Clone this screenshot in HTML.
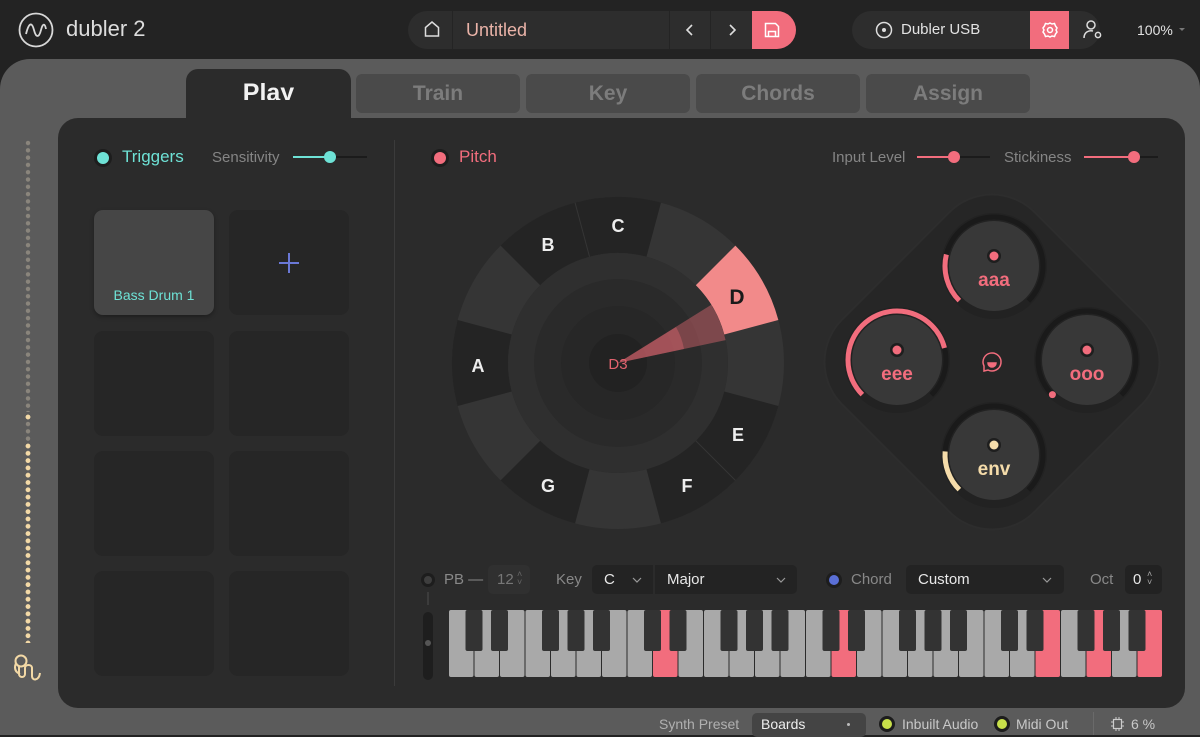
<!DOCTYPE html>
<html><head><meta charset="utf-8">
<style>
*{margin:0;padding:0;box-sizing:border-box}
body{width:1200px;height:735px;overflow:hidden;background:#222;font-family:"Liberation Sans",sans-serif;position:relative}
.a{position:absolute}
.t{position:absolute;white-space:nowrap}
.tab{position:absolute;top:74px;height:39px;width:164px;background:#4a4a4a;border-radius:6px;color:#7c7c7c;font-weight:bold;font-size:21px;text-align:center;line-height:40px}
.pad{position:absolute;width:120px;height:105px;background:#262626;border-radius:9px}
.dd{position:absolute;background:#232323;border-radius:5px;height:29px;top:565px;color:#e8e8e8;font-size:15px;line-height:29px;padding-left:12px}
.lbl{position:absolute;color:#888;font-size:15px;top:571px}
</style></head><body>
<div class="a" style="left:0;top:0;width:1200px;height:60px;background:#232323"></div>
<svg class="a" style="left:17px;top:11px" width="38" height="38" viewBox="0 0 38 38"><circle cx="19" cy="19" r="16.5" fill="none" stroke="#d8d8d8" stroke-width="1.8"/><path d="M9 23 C12 11,15 11,17 19 C19 27,22 27,24 19 C26 11,28 13,29 18" fill="none" stroke="#d8d8d8" stroke-width="1.8"/></svg>
<div class="t" style="left:66px;top:16px;color:#ddd;font-size:22px">dubler 2</div>

<div class="a" style="left:408px;top:11px;width:388px;height:38px;background:#2d2d2d;border-radius:19px;overflow:hidden">
  <div class="a" style="left:44px;top:0;width:1px;height:38px;background:#242424"></div>
  <div class="a" style="left:261px;top:0;width:1px;height:38px;background:#242424"></div>
  <div class="a" style="left:302px;top:0;width:1px;height:38px;background:#242424"></div>
  <div class="a" style="left:344px;top:0;width:44px;height:38px;background:#f26d7d"></div>
</div>
<svg class="a" style="left:423px;top:20px" width="18" height="18" viewBox="0 0 18 18"><path d="M2.5 16 V7.5 L9 2 L15.5 7.5 V16 Z" fill="none" stroke="#ddd" stroke-width="1.5"/></svg>
<div class="t" style="left:466px;top:20px;color:#eab3a8;font-size:18px">Untitled</div>
<svg class="a" style="left:684px;top:23px" width="12" height="14"><path d="M8 2 L3 7 L8 12" fill="none" stroke="#ddd" stroke-width="1.6"/></svg>
<svg class="a" style="left:726px;top:23px" width="12" height="14"><path d="M4 2 L9 7 L4 12" fill="none" stroke="#ddd" stroke-width="1.6"/></svg>
<svg class="a" style="left:763px;top:21px" width="18" height="18" viewBox="0 0 18 18"><path d="M2.5 2.5 H12.5 L15.5 5.5 V15.5 H2.5 Z M5.5 15.5 V10.5 H12.5 V15.5" fill="none" stroke="#fff" stroke-width="1.5"/></svg>

<div class="a" style="left:852px;top:11px;width:248px;height:38px;background:#2d2d2d;border-radius:19px;overflow:hidden">
  <div class="a" style="left:178px;top:0;width:39px;height:38px;background:#f26d7d"></div>
</div>
<svg class="a" style="left:874px;top:20px" width="20" height="20"><circle cx="10" cy="10" r="7.5" fill="none" stroke="#ddd" stroke-width="1.5"/><circle cx="10" cy="10" r="2" fill="#ddd"/></svg>
<div class="t" style="left:901px;top:21px;color:#e2e2e2;font-size:15px">Dubler USB</div>
<svg class="a" style="left:1040px;top:20px" width="20" height="20" viewBox="0 0 20 20"><path d="M10 3 L12 4 L14.5 3.5 L15.5 6 L17 8 L16 10 L17 12 L15.5 14 L14.5 16.5 L12 16 L10 17 L8 16 L5.5 16.5 L4.5 14 L3 12 L4 10 L3 8 L4.5 6 L5.5 3.5 L8 4 Z" fill="none" stroke="#fff" stroke-width="1.5"/><circle cx="10" cy="10" r="2.5" fill="none" stroke="#fff" stroke-width="1.5"/></svg>
<svg class="a" style="left:1082px;top:19px" width="22" height="22" viewBox="0 0 22 22"><circle cx="9" cy="6" r="4" fill="none" stroke="#ddd" stroke-width="1.5"/><path d="M2 19 C2 13,7 11,11 12" fill="none" stroke="#ddd" stroke-width="1.5"/><circle cx="16" cy="16" r="2.6" fill="none" stroke="#ddd" stroke-width="1.5"/></svg>
<div class="t" style="left:1137px;top:22px;color:#e2e2e2;font-size:14px">100%</div>
<div class="t" style="left:1179px;top:28px;width:0;height:0;border-left:3px solid transparent;border-right:3px solid transparent;border-top:3px solid #777"></div>

<div class="a" style="left:0;top:59px;width:1200px;height:676px;background:#5b5b5b;border-radius:30px 30px 0 0"></div>
<div class="a" style="left:186px;top:69px;width:165px;height:60px;background:#2b2b2b;border-radius:12px 12px 0 0"></div>
<div class="t" style="left:186px;top:79px;width:165px;text-align:center;color:#f2f2f2;font-weight:bold;font-size:25px">Play</div>
<div class="tab" style="left:356px">Train</div>
<div class="tab" style="left:526px">Key</div>
<div class="tab" style="left:696px">Chords</div>
<div class="tab" style="left:866px">Assign</div>
<div class="a" style="left:58px;top:118px;width:1127px;height:590px;background:#2b2b2b;border-radius:20px"></div>
<div class="a" style="left:186px;top:100px;width:165px;height:30px;background:#2b2b2b"></div>

<div class="a" style="left:25px;top:140px;width:6px;height:272px;background:radial-gradient(circle at 3px 3px,#8a857c 2px,transparent 2.4px) 0 0/6px 7.3px repeat-y"></div>
<div class="a" style="left:25px;top:414px;width:6px;height:7px;background:radial-gradient(circle at 3px 3px,#f3d9a6 2.2px,transparent 2.6px)"></div>
<div class="a" style="left:25px;top:421px;width:6px;height:20px;background:radial-gradient(circle at 3px 3px,#8a857c 2px,transparent 2.4px) 0 0/6px 7.3px repeat-y"></div>
<div class="a" style="left:25px;top:443px;width:6px;height:200px;background:radial-gradient(circle at 3px 3px,#f3d9a6 2.2px,transparent 2.6px) 0 0/6px 7.3px repeat-y"></div>
<svg class="a" style="left:12px;top:654px" width="32" height="30" viewBox="0 0 32 30"><circle cx="9" cy="7" r="5.5" fill="none" stroke="#f3d9a6" stroke-width="2"/><path d="M7 12 V20 C7 24,13 24,13 20 V14 C13 10,20 10,20 14 V22 C20 27,27 27,28 19" fill="none" stroke="#f3d9a6" stroke-width="2"/><path d="M4 9 C2 14,3 18,8 20" fill="none" stroke="#f3d9a6" stroke-width="2"/></svg>

<div class="a" style="left:394px;top:140px;width:1px;height:546px;background:#3b3b3b"></div>

<div class="a" style="left:94px;top:149px;width:18px;height:18px;border-radius:50%;background:#1d1d1d"></div>
<div class="a" style="left:97px;top:152px;width:12px;height:12px;border-radius:50%;background:#6ee2d6"></div>
<div class="t" style="left:122px;top:147px;color:#6ee2d6;font-size:17px">Triggers</div>
<div class="t" style="left:212px;top:149px;color:#858585;font-size:15px">Sensitivity</div>
<div class="a" style="left:293px;top:156px;width:37px;height:2px;background:#6ee2d6"></div>
<div class="a" style="left:330px;top:156px;width:37px;height:2px;background:#1b1b1b"></div>
<div class="a" style="left:324px;top:151px;width:12px;height:12px;border-radius:50%;background:#6ee2d6"></div>

<div class="pad" style="left:94px;top:210px;background:#464646;box-shadow:0 2px 4px rgba(0,0,0,.3)"></div>
<div class="t" style="left:94px;top:287px;width:120px;text-align:center;color:#6ee2d6;font-size:14px">Bass Drum 1</div>
<div class="pad" style="left:229px;top:210px"></div>
<div class="a" style="left:279px;top:262px;width:20px;height:2px;background:#6a78d6"></div>
<div class="a" style="left:288px;top:253px;width:2px;height:20px;background:#6a78d6"></div>
<div class="pad" style="left:94px;top:331px"></div><div class="pad" style="left:229px;top:331px"></div>
<div class="pad" style="left:94px;top:451px"></div><div class="pad" style="left:229px;top:451px"></div>
<div class="pad" style="left:94px;top:571px"></div><div class="pad" style="left:229px;top:571px"></div>

<div class="a" style="left:431px;top:149px;width:18px;height:18px;border-radius:50%;background:#1d1d1d"></div>
<div class="a" style="left:434px;top:152px;width:12px;height:12px;border-radius:50%;background:#f26d7d"></div>
<div class="t" style="left:459px;top:147px;color:#f26d7d;font-size:17px">Pitch</div>
<div class="t" style="left:832px;top:149px;color:#858585;font-size:15px">Input Level</div>
<div class="a" style="left:917px;top:156px;width:37px;height:2px;background:#f26d7d"></div>
<div class="a" style="left:954px;top:156px;width:36px;height:2px;background:#1b1b1b"></div>
<div class="a" style="left:948px;top:151px;width:12px;height:12px;border-radius:50%;background:#f26d7d"></div>
<div class="t" style="left:1004px;top:149px;color:#858585;font-size:15px">Stickiness</div>
<div class="a" style="left:1084px;top:156px;width:50px;height:2px;background:#f26d7d"></div>
<div class="a" style="left:1134px;top:156px;width:24px;height:2px;background:#1b1b1b"></div>
<div class="a" style="left:1128px;top:151px;width:12px;height:12px;border-radius:50%;background:#f26d7d"></div>

<svg class="a" style="left:0;top:0" width="1200" height="735">
 <g transform="translate(618,363)">
  <circle r="138" fill="none" stroke="#353535" stroke-width="56"/>
  <g fill="none" stroke="#242424" stroke-width="56" stroke-dasharray="72.26 794.82">
   <circle r="138" transform="rotate(-105)"/>
   <circle r="138" transform="rotate(15)"/>
   <circle r="138" transform="rotate(45)"/>
   <circle r="138" transform="rotate(105)"/>
   <circle r="138" transform="rotate(165)"/>
   <circle r="138" transform="rotate(225)"/>
  </g>
  <circle r="138" fill="none" stroke="#f28a8a" stroke-width="56" stroke-dasharray="72.26 794.82" transform="rotate(-45)"/>
  <line x1="0" y1="-110" x2="0" y2="-166" stroke="#353535" stroke-width="1" transform="rotate(-15)"/>
  <line x1="0" y1="-110" x2="0" y2="-166" stroke="#353535" stroke-width="1" transform="rotate(135)"/>
  <circle r="110" fill="#2f2f2f"/>
  <circle r="84" fill="#2a2a2a"/>
  <circle r="57" fill="#272727"/>
  <circle r="29" fill="#222"/>
  <path d="M0 0 L93.3 -58.3 A110 110 0 0 1 107.6 -22.9 Z" fill="rgba(242,110,120,0.4)"/>
  <path d="M0 0 L58 -36 A68 68 0 0 1 66 -14 Z" fill="rgba(242,110,120,0.35)"/>
  <g font-family="Liberation Sans" font-weight="bold" font-size="18" fill="#eee" text-anchor="middle">
   <text x="0" y="-131">C</text>
   <text x="-70" y="-112">B</text>
   <text x="-140" y="9">A</text>
   <text x="-70" y="129">G</text>
   <text x="69" y="129">F</text>
   <text x="120" y="78">E</text>
   <text x="119" y="-59" fill="#1a1a1a" font-size="21">D</text>
  </g>
  <text x="0" y="6" font-family="Liberation Sans" font-size="15" fill="#e2636f" text-anchor="middle">D3</text>
 </g>
 <g transform="translate(992,362) rotate(45)">
  <rect x="-136" y="-136" width="272" height="272" rx="60" fill="#262626" stroke="#2d2d2d" stroke-width="2"/>
 </g>
 <g font-family="Liberation Sans" font-weight="bold" font-size="19" text-anchor="middle">
  <g transform="translate(994,266)">
   <circle r="53" fill="#222"/><circle r="49" fill="none" stroke="#1a1a1a" stroke-width="5" stroke-dasharray="231 320" transform="rotate(135)"/>
   <circle r="49" fill="none" stroke="#f26d7d" stroke-width="5" stroke-dasharray="50 320" transform="rotate(135)"/>
   <circle r="45" fill="#383838"/><circle cy="-10" r="7" fill="#1e1e1e"/><circle cy="-10" r="4.5" fill="#f26d7d"/>
   <text y="20" fill="#f26d7d">aaa</text></g>
  <g transform="translate(897,360)">
   <circle r="53" fill="#222"/><circle r="49" fill="none" stroke="#1a1a1a" stroke-width="5" stroke-dasharray="231 320" transform="rotate(135)"/>
   <circle r="49" fill="none" stroke="#f26d7d" stroke-width="5" stroke-dasharray="180 320" transform="rotate(135)"/>
   <circle r="45" fill="#383838"/><circle cy="-10" r="7" fill="#1e1e1e"/><circle cy="-10" r="4.5" fill="#f26d7d"/>
   <text y="20" fill="#f26d7d">eee</text></g>
  <g transform="translate(1087,360)">
   <circle r="53" fill="#222"/><circle r="49" fill="none" stroke="#1a1a1a" stroke-width="5" stroke-dasharray="231 320" transform="rotate(135)"/>
   <circle cx="-34.6" cy="34.6" r="3.5" fill="#f26d7d"/>
   <circle r="45" fill="#383838"/><circle cy="-10" r="7" fill="#1e1e1e"/><circle cy="-10" r="4.5" fill="#f26d7d"/>
   <text y="20" fill="#f26d7d">ooo</text></g>
  <g transform="translate(994,455)">
   <circle r="53" fill="#222"/><circle r="49" fill="none" stroke="#1a1a1a" stroke-width="5" stroke-dasharray="231 320" transform="rotate(135)"/>
   <circle r="49" fill="none" stroke="#f5dcaa" stroke-width="5" stroke-dasharray="42 320" transform="rotate(135)"/>
   <circle r="45" fill="#383838"/><circle cy="-10" r="7" fill="#1e1e1e"/><circle cy="-10" r="4.5" fill="#f5dcaa"/>
   <text y="20" fill="#f5dcaa">env</text></g>
 </g>
 <g transform="translate(992,362)" fill="none" stroke="#f26d7d" stroke-width="1.5">
  <path d="M-4 8 A9 9 0 1 0 -8 4 L-8 9 Z"/><path d="M-4 1 H4 A4 4 0 0 1 -4 1 Z" fill="#f26d7d"/>
 </g>
</svg>

<div class="a" style="left:421px;top:573px;width:14px;height:14px;border-radius:50%;background:#1d1d1d"></div>
<div class="a" style="left:424px;top:576px;width:8px;height:8px;border-radius:50%;background:#3e3e3e"></div>
<div class="lbl" style="left:444px">PB —</div>
<div class="a" style="left:488px;top:565px;width:42px;height:29px;background:#303030;border-radius:5px"></div>
<div class="t" style="left:497px;top:571px;color:#777;font-size:15px">12</div>
<div class="t" style="left:517px;top:570px;color:#666;font-size:9px;line-height:8px">˄<br>˅</div>
<div class="lbl" style="left:556px">Key</div>
<div class="dd" style="left:592px;width:61px;border-radius:5px 0 0 5px">C</div>
<div class="dd" style="left:655px;width:142px;border-radius:0 5px 5px 0">Major</div>
<svg class="a" style="left:632px;top:576px" width="10" height="8"><path d="M1 2 L5 6 L9 2" fill="none" stroke="#999" stroke-width="1.2"/></svg>
<svg class="a" style="left:776px;top:576px" width="10" height="8"><path d="M1 2 L5 6 L9 2" fill="none" stroke="#999" stroke-width="1.2"/></svg>
<div class="a" style="left:826px;top:572px;width:16px;height:16px;border-radius:50%;background:#1d1d1d"></div>
<div class="a" style="left:829px;top:575px;width:10px;height:10px;border-radius:50%;background:#5a6fd6"></div>
<div class="lbl" style="left:851px">Chord</div>
<div class="dd" style="left:906px;width:158px">Custom</div>
<svg class="a" style="left:1042px;top:576px" width="10" height="8"><path d="M1 2 L5 6 L9 2" fill="none" stroke="#999" stroke-width="1.2"/></svg>
<div class="lbl" style="left:1090px">Oct</div>
<div class="dd" style="left:1125px;width:37px;padding-left:8px;background:#222">0</div>
<div class="t" style="left:1147px;top:570px;color:#aaa;font-size:9px;line-height:8px">˄<br>˅</div>

<div class="a" style="left:427px;top:592px;width:2px;height:13px;background:#3c3c3c"></div>
<div class="a" style="left:423px;top:612px;width:10px;height:68px;background:#1e1e1e;border-radius:5px"></div>
<div class="a" style="left:425px;top:640px;width:6px;height:6px;border-radius:50%;background:#555"></div>

<svg class="a" style="left:449px;top:610px" width="714" height="68">
<g fill="#a9a9a9">
<rect x="0" y="0" width="24.5" height="67" rx="2"/><rect x="25.5" y="0" width="24.5" height="67" rx="2"/><rect x="51" y="0" width="24.5" height="67" rx="2"/><rect x="76.5" y="0" width="24.5" height="67" rx="2"/><rect x="102" y="0" width="24.5" height="67" rx="2"/><rect x="127.5" y="0" width="24.5" height="67" rx="2"/><rect x="153" y="0" width="24.5" height="67" rx="2"/><rect x="178.5" y="0" width="24.5" height="67" rx="2"/><rect x="204" y="0" width="24.5" height="67" rx="2" fill="#f26d7d"/><rect x="229.5" y="0" width="24.5" height="67" rx="2"/><rect x="255" y="0" width="24.5" height="67" rx="2"/><rect x="280.5" y="0" width="24.5" height="67" rx="2"/><rect x="306" y="0" width="24.5" height="67" rx="2"/><rect x="331.5" y="0" width="24.5" height="67" rx="2"/><rect x="357" y="0" width="24.5" height="67" rx="2"/><rect x="382.5" y="0" width="24.5" height="67" rx="2" fill="#f26d7d"/><rect x="408" y="0" width="24.5" height="67" rx="2"/><rect x="433.5" y="0" width="24.5" height="67" rx="2"/><rect x="459" y="0" width="24.5" height="67" rx="2"/><rect x="484.5" y="0" width="24.5" height="67" rx="2"/><rect x="510" y="0" width="24.5" height="67" rx="2"/><rect x="535.5" y="0" width="24.5" height="67" rx="2"/><rect x="561" y="0" width="24.5" height="67" rx="2"/><rect x="586.5" y="0" width="24.5" height="67" rx="2" fill="#f26d7d"/><rect x="612" y="0" width="24.5" height="67" rx="2"/><rect x="637.5" y="0" width="24.5" height="67" rx="2" fill="#f26d7d"/><rect x="663" y="0" width="24.5" height="67" rx="2"/><rect x="688.5" y="0" width="24.5" height="67" rx="2" fill="#f26d7d"/>
</g>
<g fill="#333">
<rect x="16.5" y="0" width="17" height="41" rx="2"/><rect x="42" y="0" width="17" height="41" rx="2"/><rect x="93" y="0" width="17" height="41" rx="2"/><rect x="118.5" y="0" width="17" height="41" rx="2"/><rect x="144" y="0" width="17" height="41" rx="2"/>
<rect x="195" y="0" width="17" height="41" rx="2"/><rect x="220.5" y="0" width="17" height="41" rx="2"/><rect x="271.5" y="0" width="17" height="41" rx="2"/><rect x="297" y="0" width="17" height="41" rx="2"/><rect x="322.5" y="0" width="17" height="41" rx="2"/>
<rect x="373.5" y="0" width="17" height="41" rx="2"/><rect x="399" y="0" width="17" height="41" rx="2"/><rect x="450" y="0" width="17" height="41" rx="2"/><rect x="475.5" y="0" width="17" height="41" rx="2"/><rect x="501" y="0" width="17" height="41" rx="2"/>
<rect x="552" y="0" width="17" height="41" rx="2"/><rect x="577.5" y="0" width="17" height="41" rx="2"/><rect x="628.5" y="0" width="17" height="41" rx="2"/><rect x="654" y="0" width="17" height="41" rx="2"/><rect x="679.5" y="0" width="17" height="41" rx="2"/>
</g>
</svg>

<div class="t" style="left:659px;top:716px;color:#b0b0b0;font-size:14px">Synth Preset</div>
<div class="a" style="left:752px;top:713px;width:114px;height:24px;background:#444;border-radius:5px"></div>
<div class="t" style="left:761px;top:716px;color:#eee;font-size:14px">Boards</div>
<div class="a" style="left:847px;top:723px;width:3px;height:3px;background:#bbb;border-radius:50%"></div>
<div class="a" style="left:879px;top:716px;width:16px;height:16px;border-radius:50%;background:#1c1c1c"></div>
<div class="a" style="left:882px;top:719px;width:10px;height:10px;border-radius:50%;background:#c8e04a"></div>
<div class="t" style="left:902px;top:716px;color:#c8c8c8;font-size:14px">Inbuilt Audio</div>
<div class="a" style="left:994px;top:716px;width:16px;height:16px;border-radius:50%;background:#1c1c1c"></div>
<div class="a" style="left:997px;top:719px;width:10px;height:10px;border-radius:50%;background:#c8e04a"></div>
<div class="t" style="left:1016px;top:716px;color:#c8c8c8;font-size:14px">Midi Out</div>
<div class="a" style="left:1093px;top:712px;width:1px;height:23px;background:#6a6a6a"></div>
<svg class="a" style="left:1111px;top:717px" width="13" height="14"><rect x="2.5" y="2.5" width="8" height="9" fill="none" stroke="#ccc" stroke-width="1.2"/><path d="M0 5H2M0 9H2M11 5H13M11 9H13M5 0V2M8 0V2M5 12V14M8 12V14" stroke="#ccc"/></svg>
<div class="t" style="left:1131px;top:716px;color:#c8c8c8;font-size:14px">6 %</div>
</body></html>
